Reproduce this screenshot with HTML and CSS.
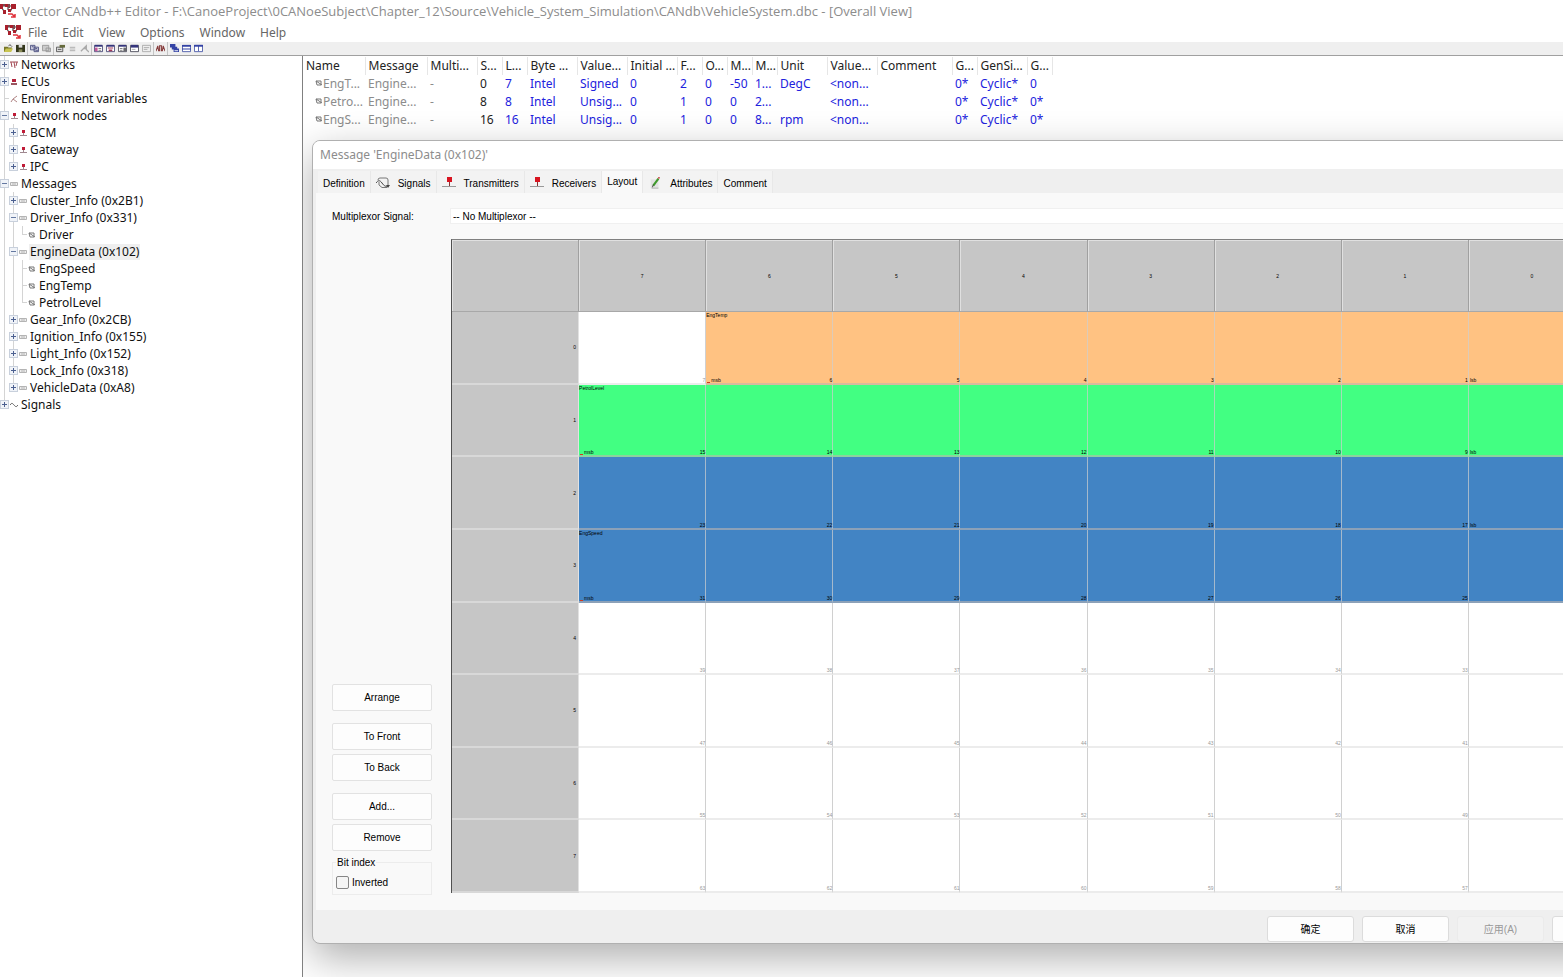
FILE: index.html
```
<!DOCTYPE html>
<html lang="en">
<head>
  <meta charset="UTF-8">
  <meta name="viewport" content="width=device-width, initial-scale=1.0">
  <title>Vector CANdb++ Editor</title>
  <link rel="stylesheet" href="styles.css">
</head>
<body>
  <!-- Shared icons -->
  <svg class="sprite" width="0" height="0">
    <symbol id="i-app" viewBox="0 0 16 16">
      <path d="M0 3h16M2 5l3 5M12 5l-2 4M8 4v3" stroke="#444" stroke-width="1.200" fill="none"/>
      <path d="M0 1h3v5H0zM5 1h3v3H5zM11 1h5v5h-5zM3 7h3v4H3zM8 6h3v3H8z" fill="#a8202c"/>
      <path d="M3 1h2v2H3zM8 1h2v4H8z" fill="#7a4a50"/>
      <path d="M8 11h4l3 3M11 14h4v-3" stroke="#e0303a" stroke-width="1.500" fill="none"/>
    </symbol>
    <symbol id="i-net" viewBox="0 0 8 8"><path d="M0 1h8M1 1l1 5M4 1l1 6M7 1L6 5" stroke="#a34a55" fill="none"/></symbol>
    <symbol id="i-ecu" viewBox="0 0 8 8"><path d="M2 1h4v3H2z" fill="#b3243c"/><path d="M1 6h6" stroke="#9a5560" stroke-width="2"/></symbol>
    <symbol id="i-env" viewBox="0 0 8 8"><path d="M7 1L3 4l4 3M3 4L1 7" stroke="#b08484" fill="none"/></symbol>
    <symbol id="i-node" viewBox="0 0 8 8"><path d="M3 1h3v3H3z" fill="#c01c38"/><path d="M4.500 4v2M1 6.500h7" stroke="#a08890" fill="none"/></symbol>
    <symbol id="i-msg" viewBox="0 0 8 8"><path d="M.5 2.500h7v3h-7zM2 4h4" stroke="#b4b4b4" fill="#eee"/></symbol>
    <symbol id="i-sig" viewBox="0 0 8 8"><path d="M1 2h5v4H2zM1 2l6 4" stroke="#777" fill="none"/></symbol>
    <symbol id="i-wave" viewBox="0 0 8 8"><path d="M0 4c2-3 3-1 4 0s2 3 4 0" stroke="#555" fill="none"/></symbol>

    <symbol id="t-open" viewBox="0 0 10 10"><path d="M0 3h4l1 1h4l-2 5H0z" fill="#77762a"/><path d="M2 5h8L8 9H0z" fill="#c9c552"/><path d="M5 2c2-2 3 0 4 1" stroke="#333" fill="none"/></symbol>
    <symbol id="t-save" viewBox="0 0 10 10"><path d="M0 1h10v8H0z" fill="#33371c"/><path d="M3 1h4v3H3z" fill="#ddd"/><path d="M3 6h4v3H3z" fill="#8a8d5a"/></symbol>
    <symbol id="t-copy" viewBox="0 0 10 10"><path d="M.5 1.500h5v5h-5zM4.500 3.500h5v5h-5z" fill="#ccd" stroke="#4c5080"/><path d="M6 5h2M6 7h3M2 3h2" stroke="#4c5080"/></symbol>
    <symbol id="t-paste" viewBox="0 0 10 10"><path d="M.5 1.500h7v6h-7zM4.500 4.500h5v4h-5z" fill="#ccc" stroke="#999"/></symbol>
    <symbol id="t-prop" viewBox="0 0 10 10"><path d="M.5 3.500h7v5h-7z" fill="#ddd" stroke="#555"/><path d="M4 1h6v3H4z" fill="#666b3c"/><path d="M2 6h4" stroke="#555"/></symbol>
    <symbol id="t-dim" viewBox="0 0 10 10"><path d="M2 3h6v2H2zM2 6h6v2H2z" fill="#bbb"/></symbol>
    <symbol id="t-link" viewBox="0 0 10 10"><path d="M1 8l3-3 3-3v4l3 3M4 5h3" stroke="#aaa" stroke-width="1.500" fill="none"/></symbol>
    <symbol id="t-view1" viewBox="0 0 10 10"><path d="M.5 1.500h9v7h-9z" fill="#fff" stroke="#4a4a78"/><path d="M1 1h8v2H1z" fill="#35357c"/><path d="M1 4h3v4H1z" fill="#c45a9a"/><path d="M5 5h3M5 7h3" stroke="#777"/></symbol>
    <symbol id="t-view2" viewBox="0 0 10 10"><path d="M.5 1.500h9v7h-9z" fill="#fff" stroke="#4a4a78"/><path d="M1 1h8v2H1z" fill="#35357c"/><path d="M2 4h6v1H2zM3 6h4v2H3z" fill="#a03a5a"/></symbol>
    <symbol id="t-view3" viewBox="0 0 10 10"><path d="M.5 1.500h9v7h-9z" fill="#fff" stroke="#4a4a58"/><path d="M1 1h8v2H1z" fill="#35357c"/><path d="M6 4h3v4H6z" fill="#68686c"/><path d="M2 5h3M2 7h3" stroke="#777"/></symbol>
    <symbol id="t-view4" viewBox="0 0 10 10"><path d="M.5 1.500h9v7h-9z" fill="#fff" stroke="#4a4a58"/><path d="M1 1h8v3H1z" fill="#35357c"/><path d="M2 6h4" stroke="#aaa"/></symbol>
    <symbol id="t-view5" viewBox="0 0 10 10"><path d="M.5 1.500h9v7h-9z" fill="#eee" stroke="#aaa"/><path d="M2 4h6M2 6h4" stroke="#aaa"/></symbol>
    <symbol id="t-check" viewBox="0 0 10 10"><path d="M0 8l2-6 1 6M4 8V2h2v6M7 8l1-6 2 6" stroke="#863c3c" stroke-width="1.200" fill="none"/></symbol>
    <symbol id="t-casc" viewBox="0 0 10 10"><path d="M0 0h6v4H0zM2 3h6v3H2zM4 5h6v4H4z" fill="#3443a5"/><path d="M5 7h4v1H5z" fill="#fff"/></symbol>
    <symbol id="t-horz" viewBox="0 0 10 10"><path d="M.5 1.500h9v7h-9z" fill="#fff" stroke="#4858a8"/><path d="M0 1h10v2H0zM0 5h10v1H0z" fill="#3443a5"/></symbol>
    <symbol id="t-vert" viewBox="0 0 10 10"><path d="M.5 1.500h9v7h-9zM5 2v6" fill="#fff" stroke="#4858a8"/><path d="M0 1h10v2H0z" fill="#3443a5"/></symbol>

    <symbol id="d-sig" viewBox="0 0 14 12"><path d="M2 3q0-2 2-2h6q2 0 2 2v5M11 10.500H6L3 8V5" stroke="#777" fill="none"/><path d="M0 6c2-3 4-3 6 0s4 4 6 3" stroke="#444" fill="none"/><path d="M10 8h4l-2 3z" fill="#444"/></symbol>
    <symbol id="d-node" viewBox="0 0 14 12"><path d="M5 0h5v5H5z" fill="#d81420"/><path d="M7.500 5v4" stroke="#833"/><path d="M0 9.500h14" stroke="#999"/></symbol>
    <symbol id="d-attr" viewBox="0 0 12 14"><path d="M1 3h9v10H1z" fill="#e2e2e2"/><path d="M2 13h8" stroke="#aaa"/><path d="M4 10l6-8" stroke="#3f9a2c" stroke-width="2.500"/><path d="M10 2l1-2" stroke="#c55" stroke-width="2"/><path d="M3 12l1-3" stroke="#333"/></symbol>
  </svg>

  <header class="titlebar">
    <svg class="app-icon"><use href="#i-app"/></svg>
    <h1>Vector CANdb++ Editor - F:\CanoeProject\0CANoeSubject\Chapter_12\Source\Vehicle_System_Simulation\CANdb\VehicleSystem.dbc - [Overall View]</h1>
  </header>

  <nav class="menubar">
    <svg class="app-icon"><use href="#i-app"/></svg>
    <button>File</button>
    <button>Edit</button>
    <button>View</button>
    <button>Options</button>
    <button>Window</button>
    <button>Help</button>
  </nav>

  <div class="toolbar">
    <div class="group">
      <button aria-label="Open"><svg><use href="#t-open"/></svg></button>
      <button aria-label="Save"><svg><use href="#t-save"/></svg></button>
    </div>
    <div class="group">
      <button aria-label="Copy"><svg><use href="#t-copy"/></svg></button>
      <button aria-label="Paste"><svg><use href="#t-paste"/></svg></button>
    </div>
    <div class="group">
      <button aria-label="Properties"><svg><use href="#t-prop"/></svg></button>
      <button aria-label="Delete"><svg><use href="#t-dim"/></svg></button>
      <button aria-label="Link"><svg><use href="#t-link"/></svg></button>
    </div>
    <div class="group">
      <button aria-label="Overall view"><svg><use href="#t-view1"/></svg></button>
      <button aria-label="Communication matrix"><svg><use href="#t-view2"/></svg></button>
      <button aria-label="List"><svg><use href="#t-view3"/></svg></button>
      <button aria-label="Attributes"><svg><use href="#t-view4"/></svg></button>
      <button aria-label="Value tables"><svg><use href="#t-view5"/></svg></button>
    </div>
    <div class="group">
      <button aria-label="Consistency check"><svg><use href="#t-check"/></svg></button>
    </div>
    <div class="group">
      <button aria-label="Cascade"><svg><use href="#t-casc"/></svg></button>
      <button aria-label="Tile horizontally"><svg><use href="#t-horz"/></svg></button>
      <button aria-label="Tile vertically"><svg><use href="#t-vert"/></svg></button>
    </div>
  </div>

  <main class="workspace">
    <aside class="tree">
      <ul>
        <li><div class="row"><i class="exp plus"></i><svg><use href="#i-net"/></svg><span>Networks</span></div></li>
        <li><div class="row"><i class="exp plus"></i><svg><use href="#i-ecu"/></svg><span>ECUs</span></div></li>
        <li><div class="row"><i class="exp branch"></i><svg><use href="#i-env"/></svg><span>Environment variables</span></div></li>
        <li><div class="row"><i class="exp"></i><svg><use href="#i-node"/></svg><span>Network nodes</span></div>
          <ul>
            <li><div class="row"><i class="exp plus"></i><svg><use href="#i-node"/></svg><span>BCM</span></div></li>
            <li><div class="row"><i class="exp plus"></i><svg><use href="#i-node"/></svg><span>Gateway</span></div></li>
            <li><div class="row"><i class="exp plus"></i><svg><use href="#i-node"/></svg><span>IPC</span></div></li>
          </ul>
        </li>
        <li><div class="row"><i class="exp"></i><svg><use href="#i-msg"/></svg><span>Messages</span></div>
          <ul>
            <li><div class="row"><i class="exp plus"></i><svg><use href="#i-msg"/></svg><span>Cluster_Info (0x2B1)</span></div></li>
            <li><div class="row"><i class="exp"></i><svg><use href="#i-msg"/></svg><span>Driver_Info (0x331)</span></div>
              <ul>
                <li><div class="row"><i class="exp branch"></i><svg><use href="#i-sig"/></svg><span>Driver</span></div></li>
              </ul>
            </li>
            <li><div class="row"><i class="exp"></i><svg><use href="#i-msg"/></svg><span class="selected">EngineData (0x102)</span></div>
              <ul>
                <li><div class="row"><i class="exp branch"></i><svg><use href="#i-sig"/></svg><span>EngSpeed</span></div></li>
                <li><div class="row"><i class="exp branch"></i><svg><use href="#i-sig"/></svg><span>EngTemp</span></div></li>
                <li><div class="row"><i class="exp branch"></i><svg><use href="#i-sig"/></svg><span>PetrolLevel</span></div></li>
              </ul>
            </li>
            <li><div class="row"><i class="exp plus"></i><svg><use href="#i-msg"/></svg><span>Gear_Info (0x2CB)</span></div></li>
            <li><div class="row"><i class="exp plus"></i><svg><use href="#i-msg"/></svg><span>Ignition_Info (0x155)</span></div></li>
            <li><div class="row"><i class="exp plus"></i><svg><use href="#i-msg"/></svg><span>Light_Info (0x152)</span></div></li>
            <li><div class="row"><i class="exp plus"></i><svg><use href="#i-msg"/></svg><span>Lock_Info (0x318)</span></div></li>
            <li><div class="row"><i class="exp plus"></i><svg><use href="#i-msg"/></svg><span>VehicleData (0xA8)</span></div></li>
          </ul>
        </li>
        <li><div class="row"><i class="exp plus"></i><svg><use href="#i-wave"/></svg><span>Signals</span></div></li>
      </ul>
    </aside>

    <section class="pane">
      <table class="signals">
        <colgroup>
          <col class="w62"><col class="w62"><col class="w50"><col class="w25"><col class="w25"><col class="w50">
          <col class="w50"><col class="w50"><col class="w25"><col class="w25"><col class="w25"><col class="w25">
          <col class="w50"><col class="w50"><col class="w75"><col class="w25"><col class="w50"><col class="w25">
        </colgroup>
        <thead>
          <tr>
            <th>Name</th><th>Message</th><th>Multi...</th><th>S...</th><th>L...</th><th>Byte ...</th>
            <th>Value...</th><th>Initial ...</th><th>F...</th><th>O...</th><th>M...</th><th>M...</th>
            <th>Unit</th><th>Value...</th><th>Comment</th><th>G...</th><th>GenSi...</th><th>G...</th>
          </tr>
        </thead>
        <tbody>
          <tr>
            <td class="name"><svg><use href="#i-sig"/></svg>EngT...</td><td>Engine...</td><td>-</td><td>0</td><td>7</td><td>Intel</td>
            <td>Signed</td><td>0</td><td>2</td><td>0</td><td>-50</td><td>1...</td>
            <td>DegC</td><td>&lt;non...</td><td></td><td>0*</td><td>Cyclic*</td><td>0</td>
          </tr>
          <tr>
            <td class="name"><svg><use href="#i-sig"/></svg>Petro...</td><td>Engine...</td><td>-</td><td>8</td><td>8</td><td>Intel</td>
            <td>Unsig...</td><td>0</td><td>1</td><td>0</td><td>0</td><td>2...</td>
            <td></td><td>&lt;non...</td><td></td><td>0*</td><td>Cyclic*</td><td>0*</td>
          </tr>
          <tr>
            <td class="name"><svg><use href="#i-sig"/></svg>EngS...</td><td>Engine...</td><td>-</td><td>16</td><td>16</td><td>Intel</td>
            <td>Unsig...</td><td>0</td><td>1</td><td>0</td><td>0</td><td>8...</td>
            <td>rpm</td><td>&lt;non...</td><td></td><td>0*</td><td>Cyclic*</td><td>0*</td>
          </tr>
        </tbody>
      </table>

      <div class="dialog" role="dialog" aria-labelledby="dialog-title">
        <h2 id="dialog-title">Message 'EngineData (0x102)'</h2>
        <div class="tabs">
          <button>Definition</button>
          <button><svg><use href="#d-sig"/></svg>Signals</button>
          <button><svg><use href="#d-node"/></svg>Transmitters</button>
          <button><svg><use href="#d-node"/></svg>Receivers</button>
          <button class="active">Layout</button>
          <button><svg><use href="#d-attr"/></svg>Attributes</button>
          <button>Comment</button>
        </div>

        <div class="panel">
          <div class="mux">
            <label for="mux">Multiplexor Signal:</label>
            <select id="mux"><option>-- No Multiplexor --</option></select>
          </div>
          <div class="content">
            <div class="side">
              <button>Arrange</button>
              <div class="pair">
                <button>To Front</button>
                <button>To Back</button>
              </div>
              <div class="pair">
                <button>Add...</button>
                <button>Remove</button>
              </div>
              <fieldset>
                <legend>Bit index</legend>
                <input type="checkbox" id="inverted"><label for="inverted">Inverted</label>
              </fieldset>
            </div>
            <div class="matrix">
              <table class="bits" id="bits"></table>
            </div>
          </div>
        </div>

        <div class="actions" lang="zh-CN">
          <button>确定</button>
          <button>取消</button>
          <button disabled>应用(A)</button>
          <button aria-label="帮助"></button>
        </div>
      </div>
    </section>
  </main>

  <script src="layout.js"></script>
</body>
</html>
```
FILE: styles.css
```
/* Reset and basic styling */
* {
  margin: 0;
  padding: 0;
  box-sizing: border-box;
}

body {
  font-family: "Noto Sans", "Noto Sans CJK SC", sans-serif;
  font-size: 12px;
  color: #222;
  background: #fff;
  display: flex;
  flex-direction: column;
  height: 100vh;
  overflow: hidden;
}

button {
  font: inherit;
  color: inherit;
  background: none;
  border: none;
}

.sprite {
  position: absolute;
}

/* Title, menu and toolbar */
.titlebar {
  display: flex;
  align-items: center;
  gap: 6px;
  height: 22px;
}

.titlebar h1 {
  font-family: "Open Sans", sans-serif;
  font-size: 13px;
  font-weight: normal;
  color: #8c8c8c;
  white-space: nowrap;
}

.app-icon {
  width: 16px;
  height: 16px;
  flex: none;
}

.menubar {
  display: flex;
  align-items: center;
  height: 20px;
  padding-left: 5px;
  gap: 15px;
  color: #666;
}

.menubar .app-icon {
  margin-right: -8px;
}

.toolbar {
  display: flex;
  height: 13px;
  padding-left: 2px;
  background: #efefef;
}

.group {
  display: flex;
  align-items: center;
  gap: 3px;
  padding: 0 2px;
  border-right: 1px solid #c4c4c4;
}

.group:last-child {
  border-right: none;
}

.group button,
.group svg {
  display: block;
  width: 9px;
  height: 9px;
}

/* Object tree */
.workspace {
  display: flex;
  flex: 1;
  min-height: 0;
  border-top: 1px solid #a0a0a0;
}

.tree {
  width: 302px;
  flex: none;
  overflow: hidden;
}

.tree ul {
  list-style: none;
}

.tree ul ul {
  padding-left: 9px;
}

.tree li {
  position: relative;
}

/* vertical guide line behind the expanders */
.tree li::before {
  content: "";
  position: absolute;
  left: 4px;
  top: 0;
  bottom: 0;
  border-left: 1px solid #d4d4d4;
}

.tree li:last-child::before {
  bottom: auto;
  height: 9px;
}

.row {
  display: flex;
  align-items: center;
  height: 17px;
  color: #111;
}

.row svg {
  width: 8px;
  height: 8px;
  margin: 0 2px 0 1px;
}

.row span {
  line-height: 16px;
  padding: 0 1px;
  white-space: nowrap;
}

.row .selected {
  background: #efefef;
}

.exp {
  position: relative;
  width: 9px;
  height: 9px;
  border: 1px solid #c8d0dc;
  background: linear-gradient(#6478a0, #6478a0) center / 5px 1px no-repeat #f0f3f8;
}

.exp.plus {
  background: linear-gradient(#4c6090, #4c6090) center / 5px 1px no-repeat,
    linear-gradient(#4c6090, #4c6090) center / 1px 5px no-repeat #f0f3f8;
}

.exp.branch {
  border: none;
  background: linear-gradient(#d4d4d4, #d4d4d4) right center / 5px 1px no-repeat;
}

/* Signal list */
.pane {
  position: relative;
  flex: 1;
  min-width: 0;
  overflow: hidden;
  border-left: 1px solid #808080;
}

.signals {
  table-layout: fixed;
  width: 749px;
  border-collapse: collapse;
  margin-top: 1px;
}

.w25 { width: 25px; }
.w50 { width: 50px; }
.w62 { width: 62px; }
.w75 { width: 75px; }

.signals th,
.signals td {
  height: 18px;
  padding-left: 3px;
  font-weight: normal;
  line-height: 16px;
  text-align: left;
  white-space: nowrap;
  color: #2222dd;
}

.signals th {
  color: #222;
  border-right: 1px solid #e6e6e6;
}

.signals td:nth-child(-n+3) {
  color: #8c8c8c;
}

.signals td:nth-child(4) {
  color: #222;
}

.signals .name {
  padding-left: 12px;
}

.signals svg {
  width: 8px;
  height: 8px;
  vertical-align: 1px;
}

/* Message dialog */
.dialog {
  position: absolute;
  left: 9px;
  right: -84px;
  top: 84px;
  bottom: 33px;
  display: flex;
  flex-direction: column;
  border: 1px solid #b0b0b0;
  border-radius: 8px;
  background: #efefef;
  box-shadow: 0 14px 40px rgba(0, 0, 0, 0.32);
  overflow: hidden;
  font-family: "Liberation Sans", "Noto Sans CJK SC", sans-serif;
  font-size: 10px;
  color: #000;
}

.dialog h2 {
  height: 28px;
  padding-left: 7px;
  font: 12px/27px "Noto Sans", sans-serif;
  color: #8c8c8c;
  background: #fff;
}

.tabs {
  display: flex;
  height: 24px;
  padding: 2px 0 0 5px;
}

.tabs button {
  display: flex;
  align-items: center;
  gap: 8px;
  padding: 2px 5px 0;
  background: #f3f3f3;
  border-right: 1px solid #e8e8e8;
}

.tabs .active {
  padding: 0 5px 2px;
  background: #f9f9f9;
}

.tabs svg {
  width: 14px;
  height: 12px;
}

.panel {
  flex: 1;
  display: flex;
  flex-direction: column;
  min-height: 0;
  margin-left: 3px;
  padding: 15px 50px 15px 16px;
  background: #f9f9f9;
}

.mux {
  display: flex;
  align-items: center;
  height: 16px;
}

.mux label {
  width: 118px;
}

.mux select {
  flex: 1;
  height: 16px;
  padding-left: 2px;
  font: inherit;
  color: inherit;
  background: #fff;
  border: 1px solid #f0f0f0;
  appearance: none;
}

.content {
  flex: 1;
  display: flex;
  gap: 19px;
  min-height: 0;
  padding-top: 15px;
}

.side {
  display: flex;
  flex-direction: column;
  justify-content: flex-end;
  gap: 12px;
  width: 100px;
}

.side button {
  width: 100px;
  height: 27px;
  background: #fdfdfd;
  border: 1px solid #e2e2e2;
  border-radius: 2px;
}

.pair {
  display: flex;
  flex-direction: column;
  gap: 4px;
}

.side fieldset {
  display: flex;
  align-items: center;
  gap: 3px;
  height: 38px;
  margin-top: -6px;
  padding: 8px 3px 0;
  border: 1px solid #ececec;
}

.side legend {
  padding: 0 1px;
}

.side input {
  width: 13px;
  height: 13px;
  appearance: none;
  background: #f5f5f5;
  border: 1px solid #868686;
  border-radius: 2px;
}

/* Bit layout matrix */
.matrix {
  flex: 1;
  padding-bottom: 2px;
}

.bits {
  width: 100%;
  height: 100%;
  table-layout: fixed;
  border-collapse: separate;
  border-spacing: 0;
  border-top: 1px solid #808080;
  border-left: 1px solid #505050;
  font-size: 5px;
  line-height: 6px;
  background: #fff;
}

.bits th {
  height: 72px;
  font-weight: normal;
  background: #c6c6c6;
  border-right: 1px solid #e2e2e2;
  border-bottom: 2px solid #d8d8d8;
}

.bits thead th {
  border-right: 1px solid #a0a0a0;
  border-bottom: 1px solid #a8a8a8;
  box-shadow: inset 1px 1px #e0e0e0;
}

.bits tbody th {
  padding-right: 2px;
  text-align: right;
}

.bits td {
  height: 72px;
  border-right: 1px solid #d0d0d0;
  border-bottom: 2px solid #ececec;
  color: #999;
}

.bits .used {
  color: #000;
  border-right-color: rgba(208, 208, 208, 0.7);
  border-bottom: 2px solid rgba(190, 180, 175, 0.6);
}

.orange { background: #ffc282; }
.green { background: #42ff82; }
.blue { background: #4284c4; }

.bit {
  display: flex;
  flex-direction: column;
  justify-content: space-between;
  height: 100%;
}

.bit-foot {
  display: flex;
  justify-content: space-between;
}

/* lsb label sits just past the left edge of its cell */
.lsb {
  padding-left: 1px;
}

.msb::before {
  content: "";
  display: inline-block;
  width: 3px;
  height: 1px;
  margin: 0 1px;
  vertical-align: bottom;
  background: #d03a20;
}

.num {
  margin-left: auto;
}

/* Dialog buttons */
.actions {
  display: flex;
  justify-content: flex-end;
  align-items: center;
  gap: 8px;
  height: 33px;
  padding: 4px 7px 0 0;
}

.actions button {
  width: 87px;
  height: 26px;
  background: #fdfdfd;
  border: 1px solid #dcdcdc;
  border-radius: 3px;
}

.actions button:disabled {
  color: #999;
  background: #f2f2f2;
  border-color: #ebebeb;
}
```
FILE: layout.js
```
// which signal covers each byte, and the bits where it starts and ends
const bytes = [
  { color: 'orange', name: 'EngTemp', from: 6, msb: 6, lsb: 0 },
  { color: 'green', name: 'PetrolLevel', from: 7, msb: 7, lsb: 0 },
  { color: 'blue', from: 7, lsb: 0 },
  { color: 'blue', name: 'EngSpeed', from: 7, msb: 7 },
  {}, {}, {}, {}
];

const table = document.getElementById('bits');
let html = '<thead><tr><th></th>';
for (let bit = 7; bit >= 0; bit--) {
  html += `<th>${bit}</th>`;
}
html += '</tr></thead><tbody>';

bytes.forEach((byte, i) => {
  html += `<tr><th>${i}</th>`;
  for (let bit = 7; bit >= 0; bit--) {
    const used = byte.color && bit <= byte.from;
    const name = used && bit === byte.from && byte.name ? byte.name : '';
    let mark = '';
    if (used && bit === byte.msb) mark = '<span class="msb">msb</span>';
    if (used && bit === byte.lsb) mark = '<span class="lsb">lsb</span>';
    html += `<td class="${used ? 'used ' + byte.color : ''}"><div class="bit">
      <span>${name}</span>
      <div class="bit-foot">${mark}<span class="num">${i * 8 + bit}</span></div>
    </div></td>`;
  }
  html += '</tr>';
});

table.innerHTML = html + '</tbody>';
```
